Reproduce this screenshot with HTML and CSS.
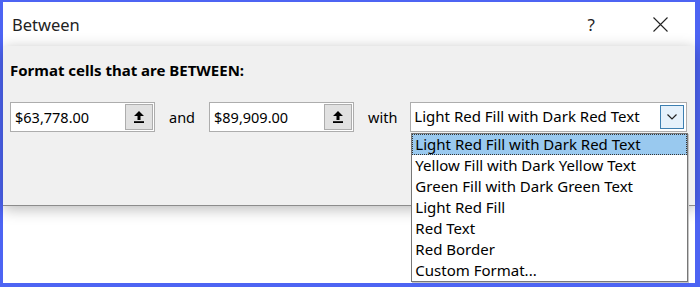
FILE: index.html
```html
<!DOCTYPE html>
<html lang="en">
  <head>
    <meta charset="utf-8">
    <title>Between</title>
    <link rel="stylesheet" href="styles.css">
  </head>
  <body>
    <div class="frame">
      <div class="dialog">
        <header class="titlebar">
          <span class="title">Between</span>
          <span class="help">?</span>
          <svg class="close" viewBox="0 0 15 15" aria-hidden="true">
            <path d="M0.5 0.5 L14.5 14.5 M14.5 0.5 L0.5 14.5" />
          </svg>
        </header>

        <div class="body">
          <p class="label">Format cells that are BETWEEN:</p>
          <div class="row">
            <div class="ref-input">
              <span class="value">$63,778.00</span>
              <span class="ref-btn">
                <svg viewBox="0 0 10 12" aria-hidden="true">
                  <path d="M5 0 L10 5 L6.5 5 L6.5 9 L3.5 9 L3.5 5 L0 5 Z" />
                  <rect x="0" y="10.2" width="10" height="1.8" />
                </svg>
              </span>
            </div>
            <span class="word">and</span>
            <div class="ref-input">
              <span class="value">$89,909.00</span>
              <span class="ref-btn">
                <svg viewBox="0 0 10 12" aria-hidden="true">
                  <path d="M5 0 L10 5 L6.5 5 L6.5 9 L3.5 9 L3.5 5 L0 5 Z" />
                  <rect x="0" y="10.2" width="10" height="1.8" />
                </svg>
              </span>
            </div>
            <span class="word">with</span>
            <div class="combo">
              <span class="value">Light Red Fill with Dark Red Text</span>
              <span class="combo-btn">
                <svg viewBox="0 0 10 6" aria-hidden="true">
                  <path d="M0.5 0.5 L5 5 L9.5 0.5" />
                </svg>
              </span>
              <ul class="combo-list">
                <li class="selected">Light Red Fill with Dark Red Text</li>
                <li>Yellow Fill with Dark Yellow Text</li>
                <li>Green Fill with Dark Green Text</li>
                <li>Light Red Fill</li>
                <li>Red Text</li>
                <li>Red Border</li>
                <li>Custom Format...</li>
              </ul>
            </div>
          </div>
        </div>
      </div>
    </div>
  </body>
</html>
```

FILE: styles.css
```css
html, body {
  margin: 0;
  padding: 0;
  background: #fff;
}

.frame {
  box-sizing: border-box;
  width: 700px;
  height: 287px;
  border: solid #4d64f3;
  border-width: 2px 5px 4px 3px;
  background: #fff;
  font-family: "Noto Sans", "Open Sans", sans-serif;
  color: #000;
}

.dialog {
  position: relative;
}

.titlebar {
  display: flex;
  align-items: center;
  height: 44px;
  padding: 0 0 0 9px;
  background: #fff;
}
.title {
  flex: 1;
  font-size: 16.5px;
  color: #222;
}
.help {
  font-size: 17px;
  color: #222;
  margin-right: 58px;
}
.close {
  width: 15px;
  height: 15px;
  margin-right: 27px;
}
.close path {
  stroke: #222;
  stroke-width: 1.1;
  fill: none;
}

.body {
  height: 158px;
  padding: 1px 0 0 7px;
  background: #f0f0f0;
  border-bottom: 1px solid #8c8c8c;
  box-shadow: 0 3px 14px rgba(0, 0, 0, 0.28);
}

.label {
  margin: 13px 0 0 0;
  font-size: 15px;
  font-weight: bold;
}

.row {
  display: flex;
  align-items: center;
  margin-top: 22px;
}

.ref-input {
  display: flex;
  box-sizing: border-box;
  width: 145px;
  height: 30px;
  border: 1px solid #adadad;
  background: #fff;
}
.ref-input .value {
  flex: 1;
  padding: 4px 0 0 4px;
  font-size: 14.5px;
}
.ref-btn {
  display: flex;
  align-items: center;
  justify-content: center;
  width: 28px;
  margin: 1px 1px 1px 0;
  box-sizing: border-box;
  border: 1px solid #adadad;
  background: #e1e1e1;
}
.ref-btn svg {
  width: 10px;
  height: 12px;
}
.ref-btn svg path, .ref-btn svg rect {
  fill: #000;
}

.word {
  font-size: 14.5px;
  padding: 0 14px;
}

.combo {
  position: relative;
  display: flex;
  box-sizing: border-box;
  width: 277px;
  height: 30px;
  margin-left: -1px;
  border: 1px solid #adadad;
  background: #fff;
}
.combo .value {
  flex: 1;
  padding: 3px 0 0 3px;
  font-size: 15px;
}
.combo-btn {
  display: flex;
  align-items: center;
  justify-content: center;
  box-sizing: border-box;
  width: 24px;
  margin: 2px 2px 2px 0;
  border: 1px solid #3c7fb1;
  background: #e5f1fb;
}
.combo-btn svg {
  width: 10px;
  height: 6px;
}
.combo-btn svg path {
  stroke: #222;
  stroke-width: 1.2;
  fill: none;
}

.combo-list {
  position: absolute;
  top: 30px;
  left: 0;
  box-sizing: border-box;
  width: 277px;
  margin: 0;
  padding: 0;
  list-style: none;
  background: #fff;
  border: 1px solid #777;
  box-shadow: 1px 1px 0 #c6c6c6;
  z-index: 2;
}
.combo-list li {
  height: 21px;
  line-height: 21px;
  padding-left: 3px;
  font-size: 15px;
}
.combo-list li.selected {
  background: #99c9ef;
  outline: 1px dotted #333;
  outline-offset: -1px;
}
```
